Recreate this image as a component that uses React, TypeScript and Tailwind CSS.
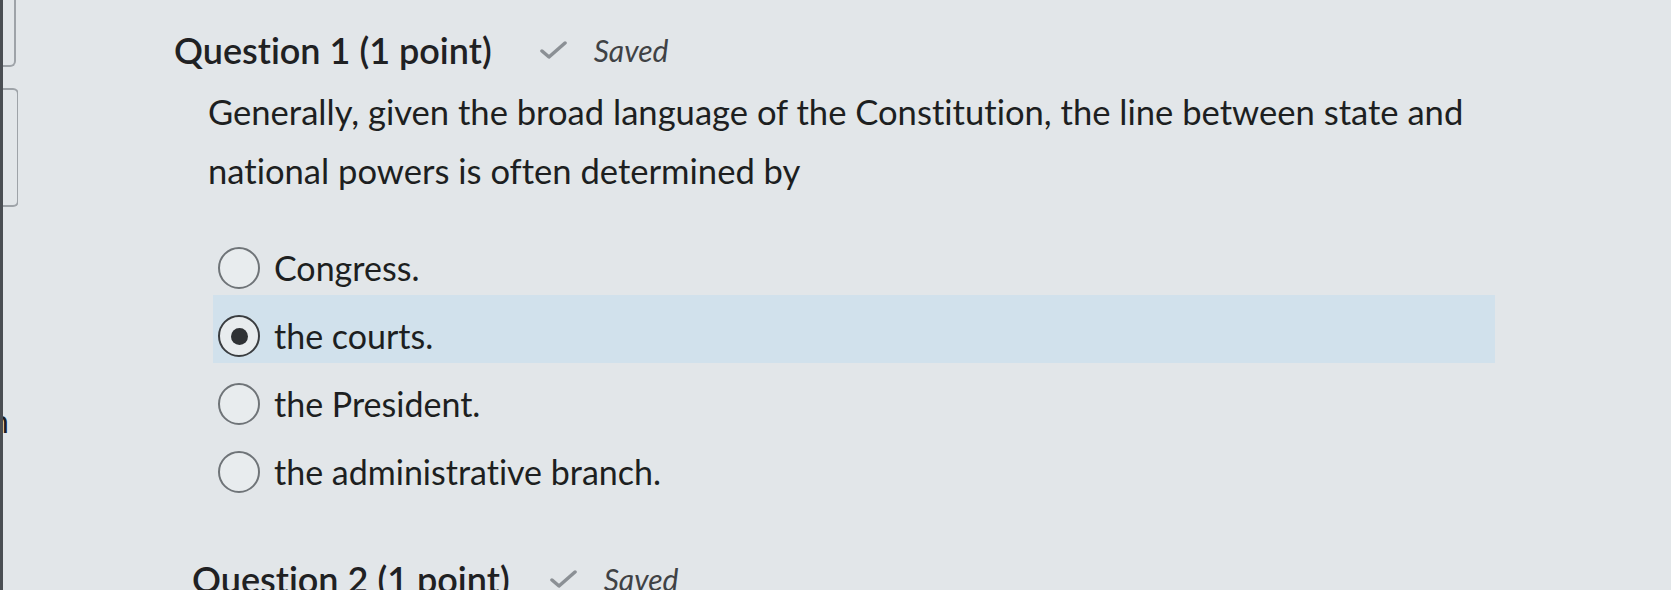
const options = [
  { label: 'Congress.', selected: false },
  { label: 'the courts.', selected: true },
  { label: 'the President.', selected: false },
  { label: 'the administrative branch.', selected: false },
]

function Check() {
  return (
    <svg width="27" height="19" viewBox="0 0 27 19" className="shrink-0">
      <path d="M2 10 L9 16 L25 2" fill="none" stroke="#8b9095" strokeWidth="3.5" strokeLinecap="round" strokeLinejoin="round" />
    </svg>
  )
}

function Radio({ selected }: { selected: boolean }) {
  return (
    <span
      className={`flex h-[42px] w-[42px] shrink-0 items-center justify-center rounded-full border-2 bg-[#e8ecee] ${
        selected ? 'border-[#3a3d40]' : 'border-[#6f7478]'
      }`}
    >
      {selected && <span className="h-[17px] w-[17px] rounded-full bg-[#2f3235]" />}
    </span>
  )
}

function QuestionHeader({ num, gap }: { num: number; gap: string }) {
  return (
    <div className="flex items-center">
      <h2 className="text-[36px] font-semibold leading-[44px] text-[#1f2123]">Question {num} (1 point)</h2>
      <span className={gap}>
        <Check />
      </span>
      <span className="ml-[27px] text-[30px] italic leading-[40px] text-[#3f4245]">Saved</span>
    </div>
  )
}

export default function App() {
  return (
    <div
      className="flex h-[590px] w-[1671px] overflow-hidden bg-[#e2e6e9] text-[#1d1f21] [font-variant-ligatures:none]"
      style={{ fontFamily: 'Lato, "Open Sans", sans-serif' }}
    >
      {/* edge of the question list panel */}
      <div className="flex w-[18px] shrink-0 flex-col overflow-hidden border-l-[3px] border-[#4a4e53]">
        <div className="-mt-[20px] h-[87px] w-[13px] rounded-br-[6px] border-b-2 border-r-2 border-[#9ea3a8]" />
        <div className="mt-[21px] h-[119px] w-[16px] rounded-r-[6px] border-y-2 border-r-2 border-[#9ea3a8]" />
        <span className="-ml-[12px] mt-[194px] text-[32px] leading-[40px]">n</span>
      </div>

      <div className="flex flex-col pl-[156px] pt-[28px]">
        <QuestionHeader num={1} gap="ml-[48px]" />

        <div className="pl-[34px] pt-[10px]">
          <p className="w-[1320px] text-[34.6px] leading-[59px]">
            Generally, given the broad language of the Constitution, the line between state and national powers is
            often determined by
          </p>

          <div className="ml-[5px] mt-[27px] flex flex-col">
            {options.map(o => (
              <label
                key={o.label}
                className={`flex h-[68px] w-[1282px] items-center gap-[14px] pl-[5px] pt-[14px] ${
                  o.selected ? 'bg-[#d1e1ec]' : ''
                }`}
              >
                <Radio selected={o.selected} />
                <span className="text-[34px] leading-[40px]">{o.label}</span>
              </label>
            ))}
          </div>
        </div>

        <div className="pl-[18px] pt-[58px]">
          <QuestionHeader num={2} gap="ml-[40px]" />
        </div>
      </div>
    </div>
  )
}
